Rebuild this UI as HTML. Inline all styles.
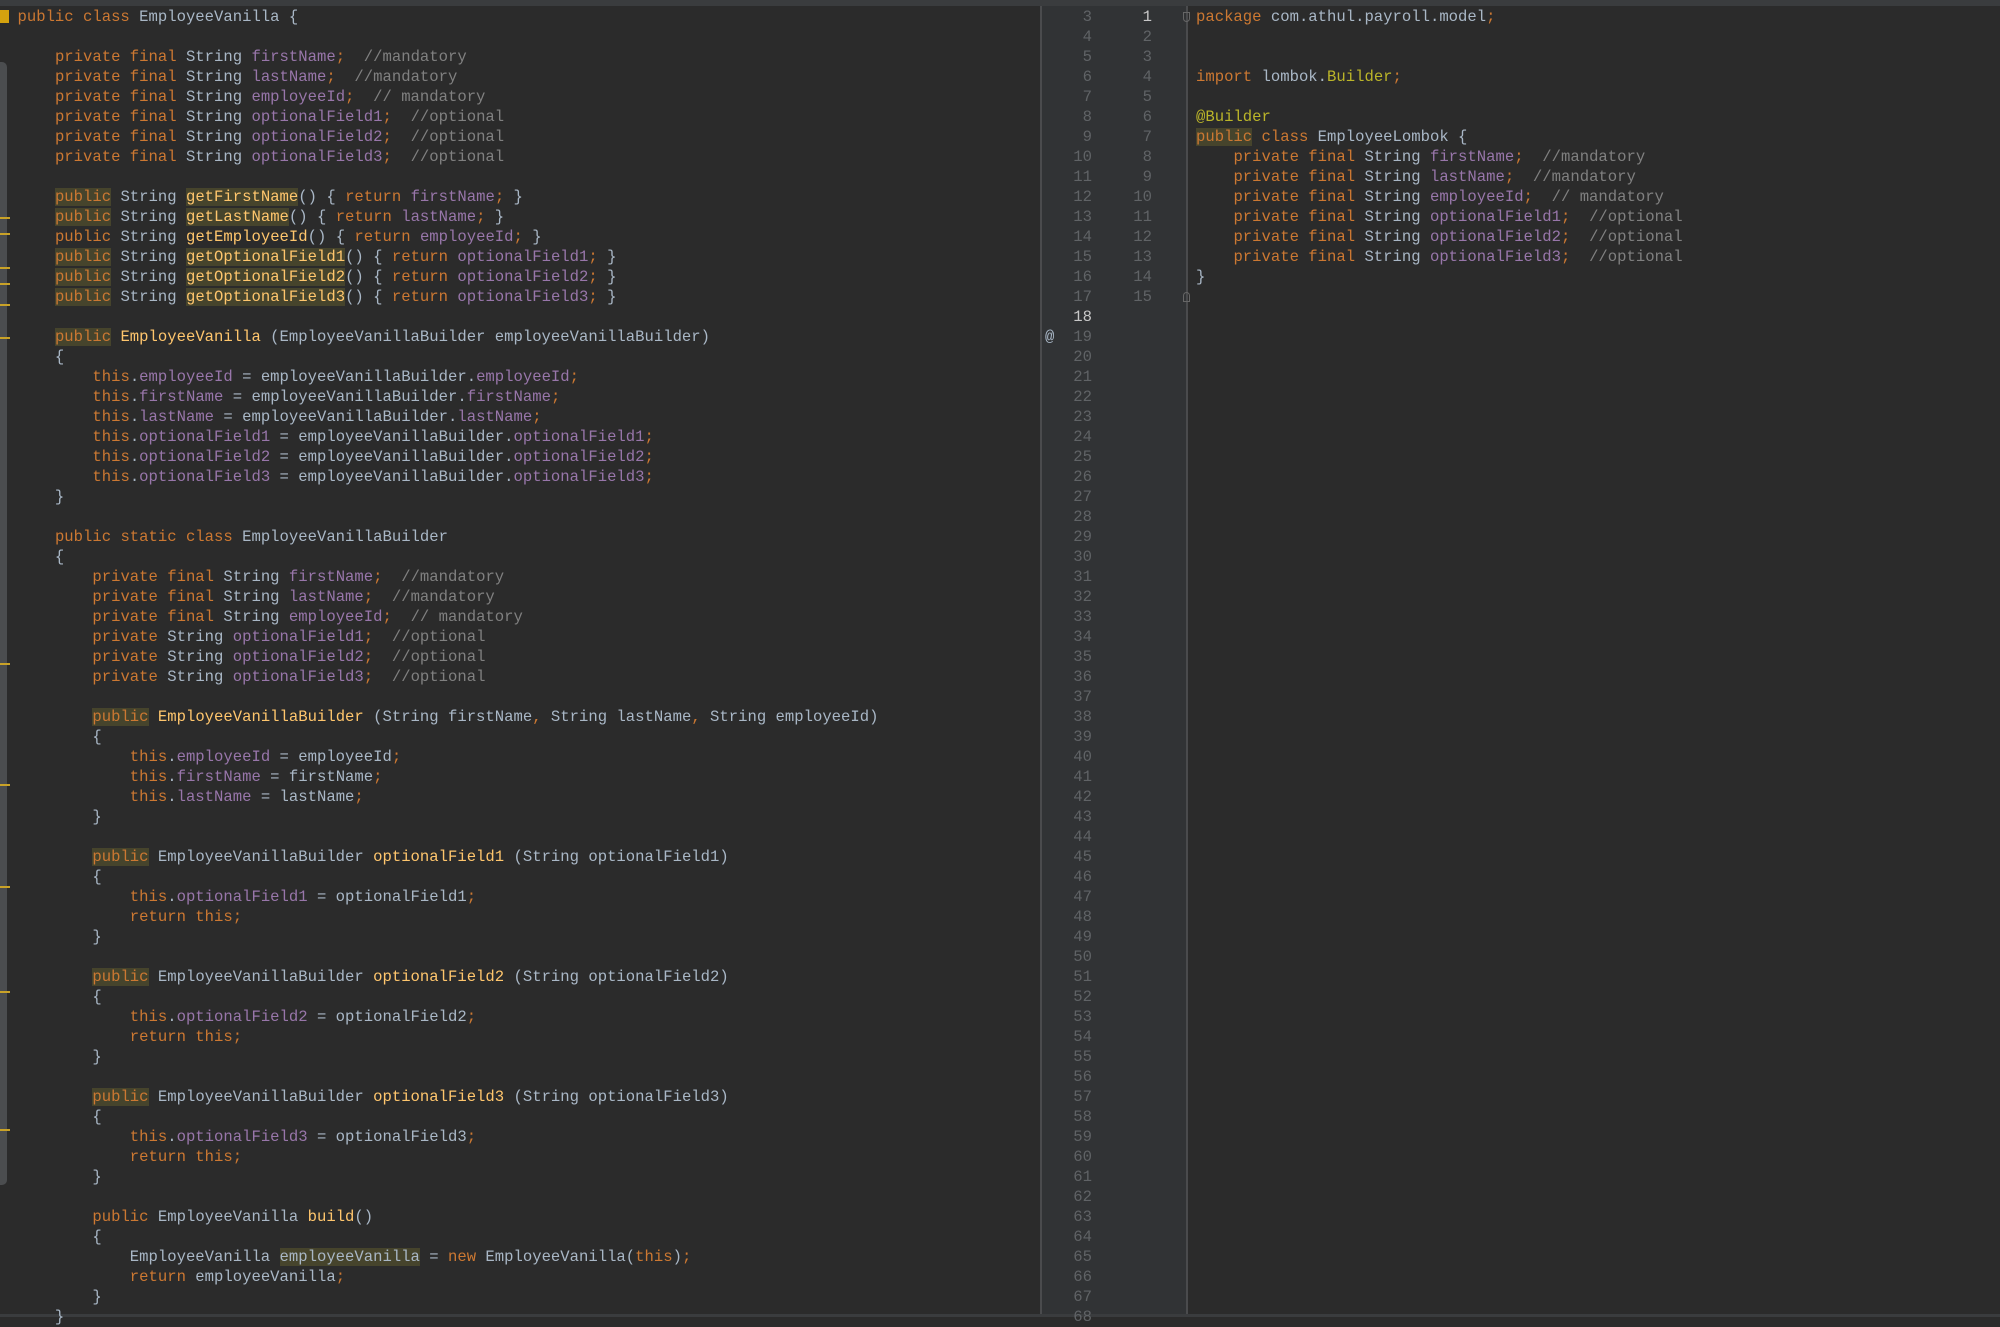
<!DOCTYPE html>
<html><head><meta charset="utf-8"><style>
html,body{margin:0;padding:0;width:2000px;height:1317px;overflow:hidden;background:#2b2b2b}
pre{margin:0;position:absolute;font-family:"Liberation Mono",monospace;font-size:15.6px;line-height:20px;color:#a9b7c6;white-space:pre}
.k{color:#cc7832}.f{color:#9876aa}.c{color:#808080}.m{color:#ffc66d}.a{color:#bbb529}.h{background:#46442c}
#top{position:absolute;left:0;top:0;width:2000px;height:6px;background:#3a3c3e}
#bot{position:absolute;left:0;top:1314px;width:2000px;height:3px;background:#3a3c3e}
#gut{position:absolute;left:1040px;top:6px;width:148px;height:1308px;background:#313335;border-left:2px solid #4a4b4d;border-right:2px solid #4a4b4d;box-sizing:border-box}
.mk{position:absolute;left:0;width:10px;height:2px;background:#c9a227}
#sb{position:absolute;left:0;top:62px;width:7px;height:1123px;background:#4b4d4f;border-radius:0 5px 5px 0}
.ln{text-align:right;color:#606366}
</style></head><body>
<div id="top"></div><div id="bot"></div>
<div id="gut"></div>
<div id="sb"></div>
<div style="position:absolute;left:0;top:10px;width:9px;height:13px;background:#d4a20e"></div>
<div class="mk" style="top:217px"></div><div class="mk" style="top:233px"></div><div class="mk" style="top:267px"></div><div class="mk" style="top:283px"></div><div class="mk" style="top:304px"></div><div class="mk" style="top:337px"></div><div class="mk" style="top:663px"></div><div class="mk" style="top:784px"></div><div class="mk" style="top:886px"></div><div class="mk" style="top:991px"></div><div class="mk" style="top:1129px"></div>
<pre style="left:17.5px;top:7px"><span class="k">public class</span> EmployeeVanilla {

    <span class="k">private final</span> String <span class="f">firstName</span><span class="k">;</span>  <span class="c">//mandatory</span>
    <span class="k">private final</span> String <span class="f">lastName</span><span class="k">;</span>  <span class="c">//mandatory</span>
    <span class="k">private final</span> String <span class="f">employeeId</span><span class="k">;</span>  <span class="c">// mandatory</span>
    <span class="k">private final</span> String <span class="f">optionalField1</span><span class="k">;</span>  <span class="c">//optional</span>
    <span class="k">private final</span> String <span class="f">optionalField2</span><span class="k">;</span>  <span class="c">//optional</span>
    <span class="k">private final</span> String <span class="f">optionalField3</span><span class="k">;</span>  <span class="c">//optional</span>

    <span class="k h">public</span> String <span class="m h">getFirstName</span>() { <span class="k">return</span> <span class="f">firstName</span><span class="k">;</span> }
    <span class="k h">public</span> String <span class="m h">getLastName</span>() { <span class="k">return</span> <span class="f">lastName</span><span class="k">;</span> }
    <span class="k">public</span> String <span class="m">getEmployeeId</span>() { <span class="k">return</span> <span class="f">employeeId</span><span class="k">;</span> }
    <span class="k h">public</span> String <span class="m h">getOptionalField1</span>() { <span class="k">return</span> <span class="f">optionalField1</span><span class="k">;</span> }
    <span class="k h">public</span> String <span class="m h">getOptionalField2</span>() { <span class="k">return</span> <span class="f">optionalField2</span><span class="k">;</span> }
    <span class="k h">public</span> String <span class="m h">getOptionalField3</span>() { <span class="k">return</span> <span class="f">optionalField3</span><span class="k">;</span> }

    <span class="k h">public</span> <span class="m">EmployeeVanilla</span> (EmployeeVanillaBuilder employeeVanillaBuilder)
    {
        <span class="k">this</span>.<span class="f">employeeId</span> = employeeVanillaBuilder.<span class="f">employeeId</span><span class="k">;</span>
        <span class="k">this</span>.<span class="f">firstName</span> = employeeVanillaBuilder.<span class="f">firstName</span><span class="k">;</span>
        <span class="k">this</span>.<span class="f">lastName</span> = employeeVanillaBuilder.<span class="f">lastName</span><span class="k">;</span>
        <span class="k">this</span>.<span class="f">optionalField1</span> = employeeVanillaBuilder.<span class="f">optionalField1</span><span class="k">;</span>
        <span class="k">this</span>.<span class="f">optionalField2</span> = employeeVanillaBuilder.<span class="f">optionalField2</span><span class="k">;</span>
        <span class="k">this</span>.<span class="f">optionalField3</span> = employeeVanillaBuilder.<span class="f">optionalField3</span><span class="k">;</span>
    }

    <span class="k">public static class</span> EmployeeVanillaBuilder
    {
        <span class="k">private final</span> String <span class="f">firstName</span><span class="k">;</span>  <span class="c">//mandatory</span>
        <span class="k">private final</span> String <span class="f">lastName</span><span class="k">;</span>  <span class="c">//mandatory</span>
        <span class="k">private final</span> String <span class="f">employeeId</span><span class="k">;</span>  <span class="c">// mandatory</span>
        <span class="k">private</span> String <span class="f">optionalField1</span><span class="k">;</span>  <span class="c">//optional</span>
        <span class="k">private</span> String <span class="f">optionalField2</span><span class="k">;</span>  <span class="c">//optional</span>
        <span class="k">private</span> String <span class="f">optionalField3</span><span class="k">;</span>  <span class="c">//optional</span>

        <span class="k h">public</span> <span class="m">EmployeeVanillaBuilder</span> (String firstName<span class="k">,</span> String lastName<span class="k">,</span> String employeeId)
        {
            <span class="k">this</span>.<span class="f">employeeId</span> = employeeId<span class="k">;</span>
            <span class="k">this</span>.<span class="f">firstName</span> = firstName<span class="k">;</span>
            <span class="k">this</span>.<span class="f">lastName</span> = lastName<span class="k">;</span>
        }

        <span class="k h">public</span> EmployeeVanillaBuilder <span class="m">optionalField1</span> (String optionalField1)
        {
            <span class="k">this</span>.<span class="f">optionalField1</span> = optionalField1<span class="k">;</span>
            <span class="k">return this;</span>
        }

        <span class="k h">public</span> EmployeeVanillaBuilder <span class="m">optionalField2</span> (String optionalField2)
        {
            <span class="k">this</span>.<span class="f">optionalField2</span> = optionalField2<span class="k">;</span>
            <span class="k">return this;</span>
        }

        <span class="k h">public</span> EmployeeVanillaBuilder <span class="m">optionalField3</span> (String optionalField3)
        {
            <span class="k">this</span>.<span class="f">optionalField3</span> = optionalField3<span class="k">;</span>
            <span class="k">return this;</span>
        }

        <span class="k">public</span> EmployeeVanilla <span class="m">build</span>()
        {
            EmployeeVanilla <span class="h">employeeVanilla</span> = <span class="k">new</span> EmployeeVanilla(<span class="k">this</span>)<span class="k">;</span>
            <span class="k">return</span> employeeVanilla<span class="k">;</span>
        }
    }</pre>
<pre class="ln" style="left:1050px;top:7px;width:42px">3
4
5
6
7
8
9
10
11
12
13
14
15
16
17
<span style="color:#c8c8c8">18</span>
19
20
21
22
23
24
25
26
27
28
29
30
31
32
33
34
35
36
37
38
39
40
41
42
43
44
45
46
47
48
49
50
51
52
53
54
55
56
57
58
59
60
61
62
63
64
65
66
67
68</pre>
<pre style="left:1045px;top:327px;color:#a9b7c6">@</pre>
<pre class="ln" style="left:1110px;top:7px;width:42px"><span style="color:#c8c8c8">1</span>
2
3
4
5
6
7
8
9
10
11
12
13
14
15</pre>
<div style="position:absolute;left:1183px;top:12px;width:7px;height:10px;border:1px solid #666;border-radius:0 0 4px 4px;box-sizing:border-box"></div>
<div style="position:absolute;left:1183px;top:292px;width:7px;height:10px;border:1px solid #666;border-radius:4px 4px 0 0;box-sizing:border-box"></div>
<pre style="left:1196px;top:7px"><span class="k">package</span> com.athul.payroll.model<span class="k">;</span>


<span class="k">import</span> lombok.<span class="a">Builder</span><span class="k">;</span>

<span class="a">@Builder</span>
<span class="k h">public</span> <span class="k">class</span> EmployeeLombok {
    <span class="k">private final</span> String <span class="f">firstName</span><span class="k">;</span>  <span class="c">//mandatory</span>
    <span class="k">private final</span> String <span class="f">lastName</span><span class="k">;</span>  <span class="c">//mandatory</span>
    <span class="k">private final</span> String <span class="f">employeeId</span><span class="k">;</span>  <span class="c">// mandatory</span>
    <span class="k">private final</span> String <span class="f">optionalField1</span><span class="k">;</span>  <span class="c">//optional</span>
    <span class="k">private final</span> String <span class="f">optionalField2</span><span class="k">;</span>  <span class="c">//optional</span>
    <span class="k">private final</span> String <span class="f">optionalField3</span><span class="k">;</span>  <span class="c">//optional</span>
}</pre>
</body></html>
